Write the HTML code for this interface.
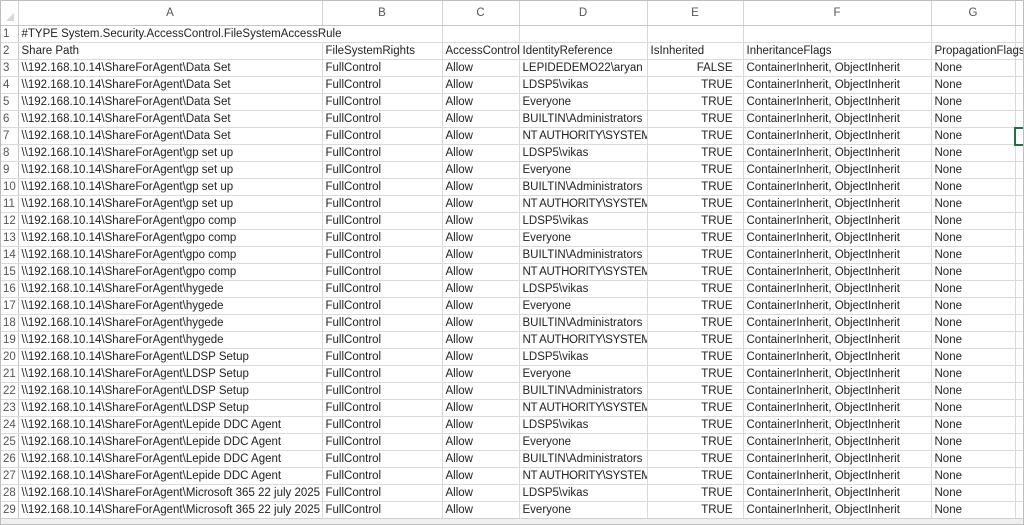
<!DOCTYPE html><html><head><style>
body{margin:0;width:1024px;height:525px;overflow:hidden;background:#fff;font-family:"Liberation Sans",sans-serif;}
.wrap{position:absolute;left:0;top:0;width:1022px;height:523px;border:1px solid #bdbdbd;background:#fff;overflow:hidden}
table{border-collapse:collapse;table-layout:fixed;position:absolute;left:-1px;top:0;width:1034px}
td{box-sizing:border-box;height:17px;border-right:1px solid #dadada;border-bottom:1px solid #dadada;font-size:11.5px;color:#222;padding:0 0 0 3px;white-space:nowrap;overflow:hidden;line-height:16px}
tr.h td{height:24px;background:#fff;color:#555;text-align:center;padding:0;border-bottom:1px solid #c6c6c6;border-right:1px solid #d4d4d4}
td.n{color:#555;text-align:left;padding-left:3px;border-right:1px solid #c6c6c6}
td.r{text-align:right;padding-right:10px}
td.s{letter-spacing:-0.35px}
.bot{position:absolute;left:0;top:517px;width:1022px;height:6px;background:#f0f0f0;border-top:1px solid #d0d0d0}
.sel{position:absolute;left:1013px;top:126px;width:10px;height:15px;border:2px solid #217346;border-right:none}
.tri{position:absolute;left:5px;top:12px;width:0;height:0;border-left:8px solid transparent;border-bottom:8px solid #d8d8d8}
</style></head><body><div class="wrap">
<table>
<colgroup><col style="width:18px"><col style="width:304px"><col style="width:120px"><col style="width:77px"><col style="width:128px"><col style="width:96px"><col style="width:188px"><col style="width:84px"><col style="width:19px"></colgroup>
<tr class="h"><td></td><td>A</td><td>B</td><td>C</td><td>D</td><td>E</td><td>F</td><td>G</td><td></td></tr>
<tr><td class="n">1</td><td style="overflow:visible;border-right:none">#TYPE System.Security.AccessControl.FileSystemAccessRule</td><td></td><td></td><td></td><td></td><td></td><td></td><td></td></tr>
<tr><td class="n">2</td><td>Share Path</td><td>FileSystemRights</td><td>AccessControlType</td><td>IdentityReference</td><td>IsInherited</td><td>InheritanceFlags</td><td style="overflow:visible">PropagationFlags</td><td></td></tr>
<tr><td class="n">3</td><td>\\192.168.10.14\ShareForAgent\Data Set</td><td>FullControl</td><td>Allow</td><td>LEPIDEDEMO22\aryan</td><td class="r">FALSE</td><td>ContainerInherit, ObjectInherit</td><td>None</td><td></td></tr>
<tr><td class="n">4</td><td>\\192.168.10.14\ShareForAgent\Data Set</td><td>FullControl</td><td>Allow</td><td>LDSP5\vikas</td><td class="r">TRUE</td><td>ContainerInherit, ObjectInherit</td><td>None</td><td></td></tr>
<tr><td class="n">5</td><td>\\192.168.10.14\ShareForAgent\Data Set</td><td>FullControl</td><td>Allow</td><td>Everyone</td><td class="r">TRUE</td><td>ContainerInherit, ObjectInherit</td><td>None</td><td></td></tr>
<tr><td class="n">6</td><td>\\192.168.10.14\ShareForAgent\Data Set</td><td>FullControl</td><td>Allow</td><td>BUILTIN\Administrators</td><td class="r">TRUE</td><td>ContainerInherit, ObjectInherit</td><td>None</td><td></td></tr>
<tr><td class="n">7</td><td>\\192.168.10.14\ShareForAgent\Data Set</td><td>FullControl</td><td>Allow</td><td class="s">NT AUTHORITY\SYSTEM</td><td class="r">TRUE</td><td>ContainerInherit, ObjectInherit</td><td>None</td><td></td></tr>
<tr><td class="n">8</td><td>\\192.168.10.14\ShareForAgent\gp set up</td><td>FullControl</td><td>Allow</td><td>LDSP5\vikas</td><td class="r">TRUE</td><td>ContainerInherit, ObjectInherit</td><td>None</td><td></td></tr>
<tr><td class="n">9</td><td>\\192.168.10.14\ShareForAgent\gp set up</td><td>FullControl</td><td>Allow</td><td>Everyone</td><td class="r">TRUE</td><td>ContainerInherit, ObjectInherit</td><td>None</td><td></td></tr>
<tr><td class="n">10</td><td>\\192.168.10.14\ShareForAgent\gp set up</td><td>FullControl</td><td>Allow</td><td>BUILTIN\Administrators</td><td class="r">TRUE</td><td>ContainerInherit, ObjectInherit</td><td>None</td><td></td></tr>
<tr><td class="n">11</td><td>\\192.168.10.14\ShareForAgent\gp set up</td><td>FullControl</td><td>Allow</td><td class="s">NT AUTHORITY\SYSTEM</td><td class="r">TRUE</td><td>ContainerInherit, ObjectInherit</td><td>None</td><td></td></tr>
<tr><td class="n">12</td><td>\\192.168.10.14\ShareForAgent\gpo comp</td><td>FullControl</td><td>Allow</td><td>LDSP5\vikas</td><td class="r">TRUE</td><td>ContainerInherit, ObjectInherit</td><td>None</td><td></td></tr>
<tr><td class="n">13</td><td>\\192.168.10.14\ShareForAgent\gpo comp</td><td>FullControl</td><td>Allow</td><td>Everyone</td><td class="r">TRUE</td><td>ContainerInherit, ObjectInherit</td><td>None</td><td></td></tr>
<tr><td class="n">14</td><td>\\192.168.10.14\ShareForAgent\gpo comp</td><td>FullControl</td><td>Allow</td><td>BUILTIN\Administrators</td><td class="r">TRUE</td><td>ContainerInherit, ObjectInherit</td><td>None</td><td></td></tr>
<tr><td class="n">15</td><td>\\192.168.10.14\ShareForAgent\gpo comp</td><td>FullControl</td><td>Allow</td><td class="s">NT AUTHORITY\SYSTEM</td><td class="r">TRUE</td><td>ContainerInherit, ObjectInherit</td><td>None</td><td></td></tr>
<tr><td class="n">16</td><td>\\192.168.10.14\ShareForAgent\hygede</td><td>FullControl</td><td>Allow</td><td>LDSP5\vikas</td><td class="r">TRUE</td><td>ContainerInherit, ObjectInherit</td><td>None</td><td></td></tr>
<tr><td class="n">17</td><td>\\192.168.10.14\ShareForAgent\hygede</td><td>FullControl</td><td>Allow</td><td>Everyone</td><td class="r">TRUE</td><td>ContainerInherit, ObjectInherit</td><td>None</td><td></td></tr>
<tr><td class="n">18</td><td>\\192.168.10.14\ShareForAgent\hygede</td><td>FullControl</td><td>Allow</td><td>BUILTIN\Administrators</td><td class="r">TRUE</td><td>ContainerInherit, ObjectInherit</td><td>None</td><td></td></tr>
<tr><td class="n">19</td><td>\\192.168.10.14\ShareForAgent\hygede</td><td>FullControl</td><td>Allow</td><td class="s">NT AUTHORITY\SYSTEM</td><td class="r">TRUE</td><td>ContainerInherit, ObjectInherit</td><td>None</td><td></td></tr>
<tr><td class="n">20</td><td>\\192.168.10.14\ShareForAgent\LDSP Setup</td><td>FullControl</td><td>Allow</td><td>LDSP5\vikas</td><td class="r">TRUE</td><td>ContainerInherit, ObjectInherit</td><td>None</td><td></td></tr>
<tr><td class="n">21</td><td>\\192.168.10.14\ShareForAgent\LDSP Setup</td><td>FullControl</td><td>Allow</td><td>Everyone</td><td class="r">TRUE</td><td>ContainerInherit, ObjectInherit</td><td>None</td><td></td></tr>
<tr><td class="n">22</td><td>\\192.168.10.14\ShareForAgent\LDSP Setup</td><td>FullControl</td><td>Allow</td><td>BUILTIN\Administrators</td><td class="r">TRUE</td><td>ContainerInherit, ObjectInherit</td><td>None</td><td></td></tr>
<tr><td class="n">23</td><td>\\192.168.10.14\ShareForAgent\LDSP Setup</td><td>FullControl</td><td>Allow</td><td class="s">NT AUTHORITY\SYSTEM</td><td class="r">TRUE</td><td>ContainerInherit, ObjectInherit</td><td>None</td><td></td></tr>
<tr><td class="n">24</td><td>\\192.168.10.14\ShareForAgent\Lepide DDC Agent</td><td>FullControl</td><td>Allow</td><td>LDSP5\vikas</td><td class="r">TRUE</td><td>ContainerInherit, ObjectInherit</td><td>None</td><td></td></tr>
<tr><td class="n">25</td><td>\\192.168.10.14\ShareForAgent\Lepide DDC Agent</td><td>FullControl</td><td>Allow</td><td>Everyone</td><td class="r">TRUE</td><td>ContainerInherit, ObjectInherit</td><td>None</td><td></td></tr>
<tr><td class="n">26</td><td>\\192.168.10.14\ShareForAgent\Lepide DDC Agent</td><td>FullControl</td><td>Allow</td><td>BUILTIN\Administrators</td><td class="r">TRUE</td><td>ContainerInherit, ObjectInherit</td><td>None</td><td></td></tr>
<tr><td class="n">27</td><td>\\192.168.10.14\ShareForAgent\Lepide DDC Agent</td><td>FullControl</td><td>Allow</td><td class="s">NT AUTHORITY\SYSTEM</td><td class="r">TRUE</td><td>ContainerInherit, ObjectInherit</td><td>None</td><td></td></tr>
<tr><td class="n">28</td><td>\\192.168.10.14\ShareForAgent\Microsoft 365 22 july 2025</td><td>FullControl</td><td>Allow</td><td>LDSP5\vikas</td><td class="r">TRUE</td><td>ContainerInherit, ObjectInherit</td><td>None</td><td></td></tr>
<tr><td class="n">29</td><td>\\192.168.10.14\ShareForAgent\Microsoft 365 22 july 2025</td><td>FullControl</td><td>Allow</td><td>Everyone</td><td class="r">TRUE</td><td>ContainerInherit, ObjectInherit</td><td>None</td><td></td></tr>
</table>
<div class="tri"></div>
<div class="sel"></div>
<div class="bot"></div>
</div></body></html>
